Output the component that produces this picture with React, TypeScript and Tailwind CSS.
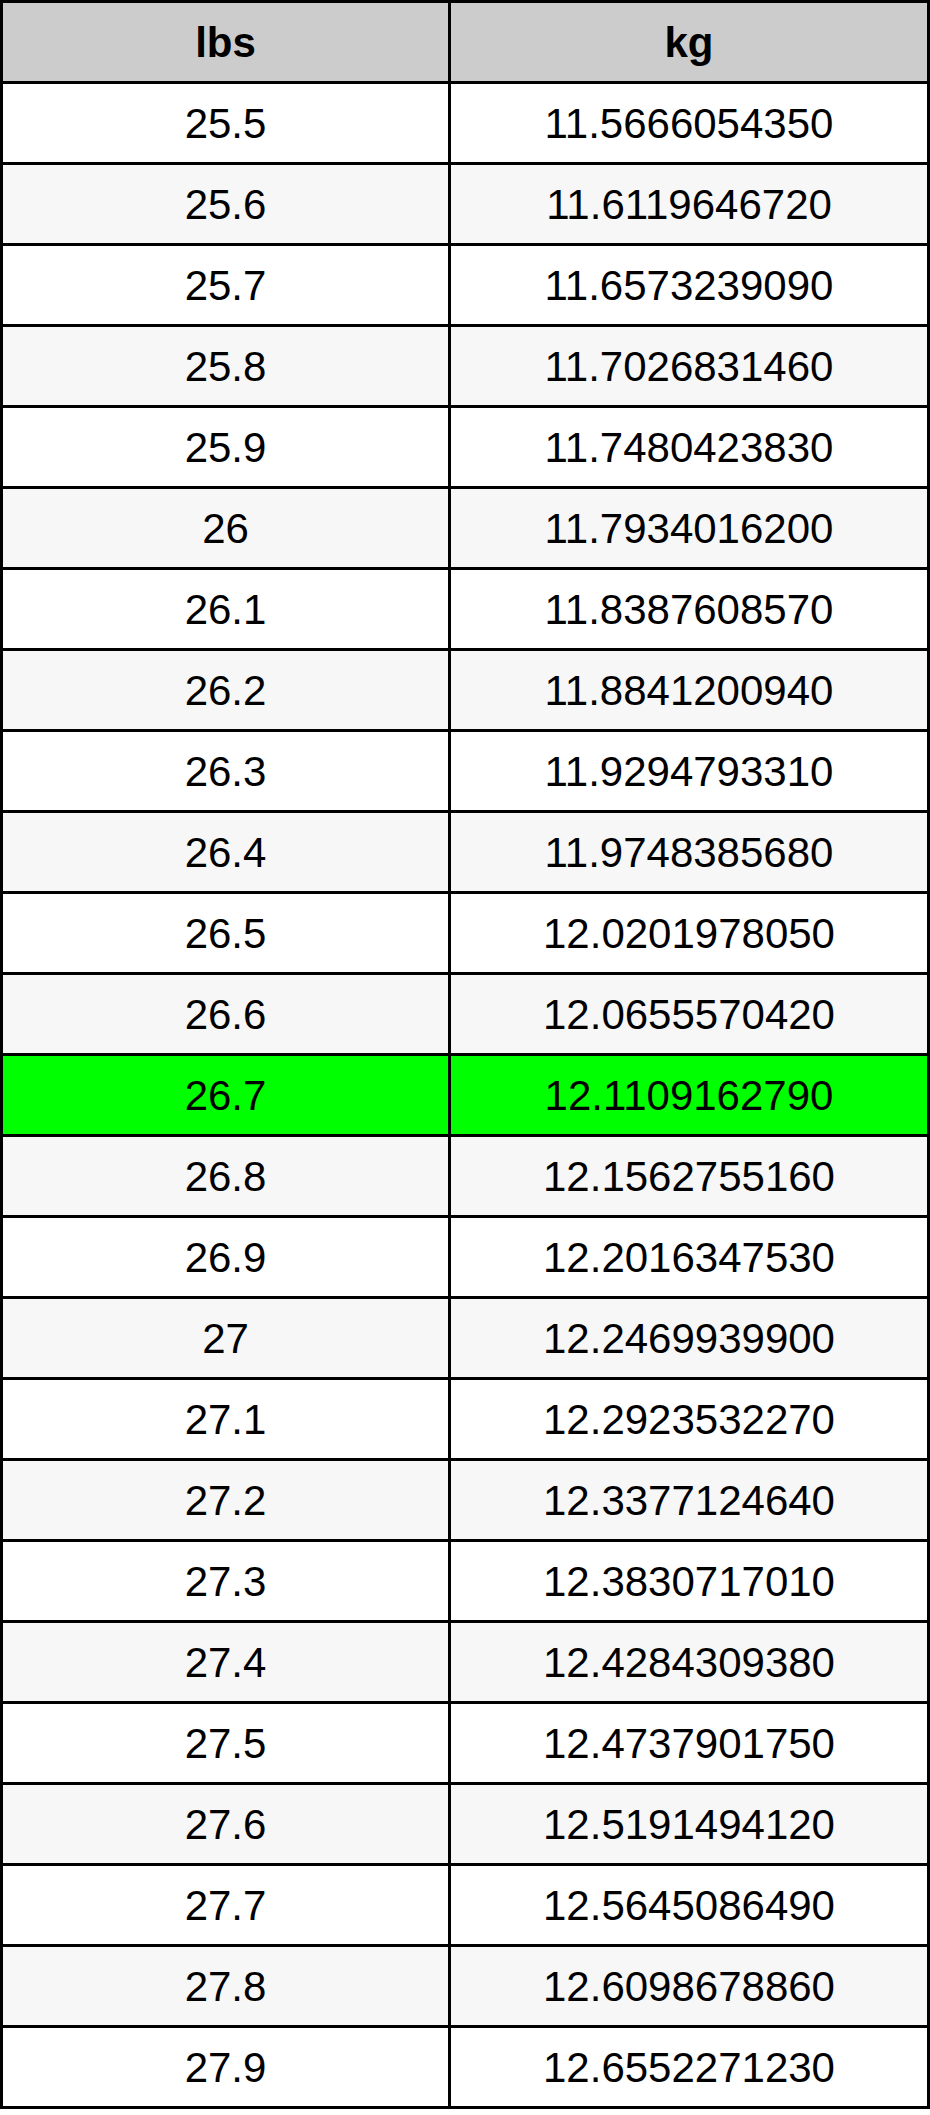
const rows: [string, string][] = [
  ['25.5', '11.5666054350'],
  ['25.6', '11.6119646720'],
  ['25.7', '11.6573239090'],
  ['25.8', '11.7026831460'],
  ['25.9', '11.7480423830'],
  ['26', '11.7934016200'],
  ['26.1', '11.8387608570'],
  ['26.2', '11.8841200940'],
  ['26.3', '11.9294793310'],
  ['26.4', '11.9748385680'],
  ['26.5', '12.0201978050'],
  ['26.6', '12.0655570420'],
  ['26.7', '12.1109162790'],
  ['26.8', '12.1562755160'],
  ['26.9', '12.2016347530'],
  ['27', '12.2469939900'],
  ['27.1', '12.2923532270'],
  ['27.2', '12.3377124640'],
  ['27.3', '12.3830717010'],
  ['27.4', '12.4284309380'],
  ['27.5', '12.4737901750'],
  ['27.6', '12.5191494120'],
  ['27.7', '12.5645086490'],
  ['27.8', '12.6098678860'],
  ['27.9', '12.6552271230'],
];

const HIGHLIGHT = '26.7';

function rowBg(index: number, lbs: string): string {
  if (lbs === HIGHLIGHT) return 'bg-[#00ff00]';
  return index % 2 === 0 ? 'bg-white' : 'bg-[#f7f7f7]';
}

export default function App() {
  return (
    <div className="w-[930px] bg-white font-['Liberation_Sans',Arial,sans-serif] text-[42px] text-black">
      <div className="flex flex-col border-[3px] border-black">
        <div className="flex h-[81px] border-b-[3px] border-black bg-[#cccccc] font-bold">
          <div className="flex w-[448px] items-center justify-center border-r-[3px] border-black">lbs</div>
          <div className="flex flex-1 items-center justify-center">kg</div>
        </div>
        {rows.map(([lbs, kg], i) => (
          <div
            key={lbs}
            className={`flex ${i === rows.length - 1 ? 'h-[78px]' : 'h-[81px] border-b-[3px] border-black'} ${rowBg(i, lbs)}`}
          >
            <div className="flex w-[448px] items-center justify-center border-r-[3px] border-black">{lbs}</div>
            <div className="flex flex-1 items-center justify-center">{kg}</div>
          </div>
        ))}
      </div>
    </div>
  );
}
